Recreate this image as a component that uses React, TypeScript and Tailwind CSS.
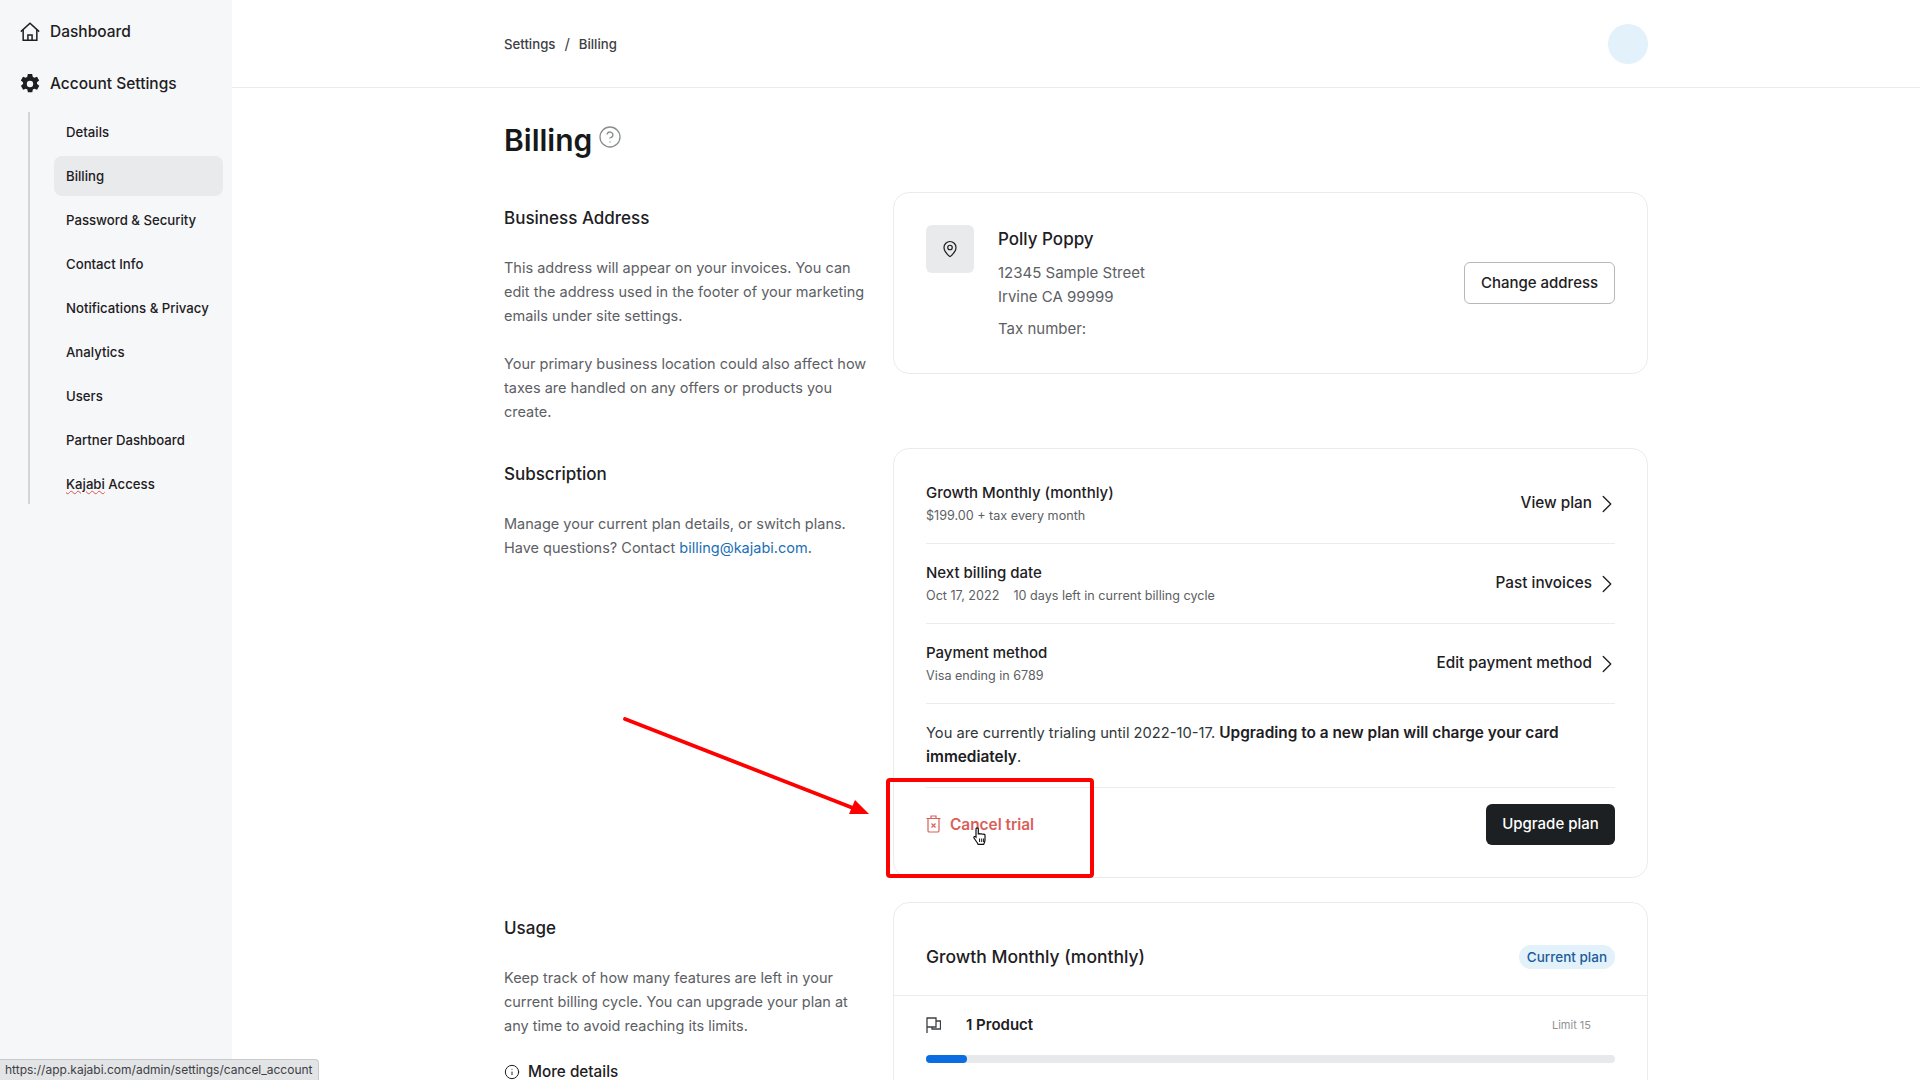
import { ChevronRight, CircleHelp, Info, MapPin } from "lucide-react";

const NAV = [
  "Details",
  "Billing",
  "Password & Security",
  "Contact Info",
  "Notifications & Privacy",
  "Analytics",
  "Users",
  "Partner Dashboard",
  "Kajabi Access",
];

const BILLING_ROWS = [
  { title: "Growth Monthly (monthly)", sub: "$199.00 + tax every month", link: "View plan" },
  { title: "Next billing date", sub: "Oct 17, 2022\u00a0\u00a0\u00a0 10 days left in current billing cycle", link: "Past invoices" },
  { title: "Payment method", sub: "Visa ending in 6789", link: "Edit payment method" },
];

function HomeIcon() {
  return (
    <svg viewBox="0 0 24 24" className="h-5 w-5 shrink-0" fill="none" stroke="#1d2023" strokeWidth="1.8">
      <path d="M1 11.5 12 1.5l11 10" />
      <path d="M3.8 9.5V22h16.4V9.5" />
      <path d="M9.5 22v-6.5h5V22" />
    </svg>
  );
}

function GearIcon() {
  return (
    <svg viewBox="1 1 22 22" className="h-5 w-5 shrink-0" fill="#1d2023">
      <path
        fillRule="evenodd"
        d="M9.6 1h4.8l.6 3.1 1.7.9 3-1.1 2.4 4.2-2.4 2 .1 1.9 2.4 2-2.4 4.2-3-1.1-1.7 1-.6 3h-4.8l-.6-3-1.7-1-3 1.1-2.4-4.2 2.4-2-.1-1.9-2.4-2 2.4-4.2 3 1.1 1.7-.9zM12 8.5a3.5 3.5 0 1 0 0 7 3.5 3.5 0 0 0 0-7z"
      />
    </svg>
  );
}

function Sidebar() {
  return (
    <aside className="w-[232px] shrink-0 bg-[#f6f7f8] pl-5 pt-[22px]">
      <div className="flex h-5 items-center gap-[10px] text-[15.5px] font-medium text-[#1d2023]">
        <HomeIcon />
        Dashboard
      </div>
      <div className="mt-[32px] flex h-5 items-center gap-[10px] text-[15.5px] font-medium text-[#1d2023]">
        <GearIcon />
        Account Settings
      </div>
      <div className="ml-[8px] mt-[18px] border-l-2 border-[#d3d5d7] pl-[24px]">
        {NAV.map((item) => (
          <div
            key={item}
            className={`mb-1 flex h-10 w-[169px] items-center rounded-lg pl-[12px] pt-[2px] text-[13.2px] font-medium text-[#1d2023] last:mb-0 ${
              item === "Billing" ? "bg-[#e9eaeb]" : ""
            }`}
          >
            {item === "Kajabi Access" ? (
              <>
                <span className="underline decoration-wavy decoration-[#d9534f] decoration-1">Kajabi</span>
                &nbsp;Access
              </>
            ) : (
              item
            )}
          </div>
        ))}
      </div>
    </aside>
  );
}

function Card({ children, className }: { children: React.ReactNode; className?: string }) {
  return <div className={`rounded-2xl border border-[#ebeced] bg-white ${className ?? ""}`}>{children}</div>;
}

function LeftText({ title, children }: { title: string; children: React.ReactNode }) {
  return (
    <div className="pt-[14px]">
      <h2 className="text-[17px] font-medium leading-6 text-[#1d2023]">{title}</h2>
      <div className="mt-[26px] text-[14.5px] leading-6 text-[#5c6064]">{children}</div>
    </div>
  );
}

function TrashX() {
  return (
    <svg viewBox="0 0 15 18" className="h-[18px] w-[15px]" fill="none" stroke="#d9605a" strokeWidth="1.2">
      <path d="M.5 3.5h14M5 3.5V1h5v2.5M2 3.5v12.2q0 1.3 1.3 1.3h8.4q1.3 0 1.3-1.3V3.5" />
      <path d="m5.5 8.5 4 4M9.500 8.500l-4 4" />
    </svg>
  );
}

function FlagIcon() {
  return (
    <svg viewBox="0 0 15 16" className="h-4 w-[15px] shrink-0" fill="none" stroke="#3c4044" strokeWidth="1.3">
      <path d="M1 16V1h9v9H1" />
      <path d="M10 4h4.500v8H6v-2" />
    </svg>
  );
}

export default function App() {
  return (
    <div className="relative flex h-screen w-full overflow-hidden bg-white font-['Inter','Liberation_Sans',sans-serif]">
      <Sidebar />
      <div className="min-w-0 flex-1">
        <header className="h-[88px] border-b border-[#ebeced]">
          <div className="ml-[272px] flex h-[87px] w-[1144px] items-center justify-between">
            <div className="flex items-center gap-[9px] pt-[2px] text-[13.2px] font-medium text-[#3c4044]">
              <span>Settings</span>
              <span className="text-[15px] font-normal">/</span>
              <span>Billing</span>
            </div>
            <div className="h-10 w-10 rounded-full bg-[#e3f1fa]" />
          </div>
        </header>

        <main className="ml-[272px] w-[1144px]">
          <div className="flex h-[104px] items-start gap-[6px] pt-[32px]">
            <h1 className="text-[30px] font-semibold leading-10 text-[#16181a]">Billing</h1>
            <CircleHelp className="mt-[5px] h-6 w-6 text-[#8a8d90]" strokeWidth={1.3} />
          </div>

          <div className="grid grid-cols-[375px_1fr] gap-x-[14px] gap-y-[24px]">
            <LeftText title="Business Address">
              <p>
                This address will appear on your invoices. You can
                <br />
                edit the address used in the footer of your marketing
                <br />
                emails under site settings.
              </p>
              <p className="mt-6">
                Your primary business location could also affect how
                <br />
                taxes are handled on any offers or products you
                <br />
                create.
              </p>
            </LeftText>
            <Card className="flex h-[182px] items-center justify-between self-start pl-[32px] pr-[32px]">
              <div className="flex self-start pt-[32px]">
                <div className="flex h-12 w-12 items-center justify-center rounded-md bg-[#e9eaeb]">
                  <MapPin className="h-[18px] w-[18px] text-[#1d2023]" strokeWidth={1.6} />
                </div>
                <div className="ml-6 text-[15px] leading-6 text-[#5c6064]">
                  <div className="mb-[8px] text-[17px] font-medium leading-7 text-[#1d2023]">Polly Poppy</div>
                  <div>12345 Sample Street</div>
                  <div>Irvine CA 99999</div>
                  <div className="mt-2">Tax number:</div>
                </div>
              </div>
              <button className="h-[42px] w-[151px] rounded-md border border-[#b5b7b9] text-[15px] font-medium text-[#1d2023]">
                Change address
              </button>
            </Card>

            <LeftText title="Subscription">
              <p>
                Manage your current plan details, or switch plans.
                <br />
                Have questions? Contact <span className="text-[#1b6fb5]">billing@kajabi.com</span>.
              </p>
            </LeftText>
            <Card className="h-[430px] px-[32px] pt-[15px]">
              {BILLING_ROWS.map((row) => (
                <div key={row.title} className="flex h-[80px] items-center justify-between border-b border-[#ebeced]">
                  <div>
                    <div className="text-[15px] font-medium leading-6 text-[#1d2023]">{row.title}</div>
                    <div className="text-[12.6px] leading-[22px] text-[#5c6064]">{row.sub}</div>
                  </div>
                  <div className="-mr-[7px] flex items-center text-[15.3px] font-medium text-[#1d2023]">
                    {row.link}
                    <ChevronRight className="h-[30px] w-[30px]" strokeWidth={1.1} />
                  </div>
                </div>
              ))}
              <div className="border-b border-[#ebeced] pb-[18px] pt-[17px] text-[14.7px] leading-6 text-[#33373a]">
                You are currently trialing until 2022-10-17.{" "}
                <b className="text-[15.4px] font-semibold text-[#1d2023]">Upgrading to a new plan will charge your card immediately</b>.
              </div>
              <div className="flex items-center justify-between pt-[16px]">
                <div className="flex items-center gap-[9px] text-[15.4px] font-semibold text-[#d9605a]">
                  <TrashX />
                  Cancel trial
                </div>
                <button className="h-[41px] w-[129px] rounded-md bg-[#1d2023] text-[15px] font-medium text-white">
                  Upgrade plan
                </button>
              </div>
            </Card>

            <LeftText title="Usage">
              <p>
                Keep track of how many features are left in your
                <br />
                current billing cycle. You can upgrade your plan at
                <br />
                any time to avoid reaching its limits.
              </p>
              <div className="mt-[22px] flex items-center gap-2 text-[15.3px] font-medium text-[#1d2023]">
                <Info className="h-4 w-4" strokeWidth={1.5} />
                More details
              </div>
            </LeftText>
            <Card className="h-[300px]">
              <div className="flex h-[93px] items-center justify-between border-b border-[#ebeced] px-[32px] pt-[16px]">
                <div className="text-[17.5px] font-medium text-[#1d2023]">Growth Monthly (monthly)</div>
                <div className="rounded-full bg-[#e3f1fa] px-[8px] py-[2px] text-[13.5px] font-medium text-[#1c5c9c]">Current plan</div>
              </div>
              <div className="px-[32px] pt-[18px]">
                <div className="flex items-center">
                  <FlagIcon />
                  <span className="ml-[25px] text-[15px] font-semibold text-[#1d2023]">1 Product</span>
                  <span className="ml-auto mr-6 text-[11px] text-[#8f9295]">Limit 15</span>
                </div>
                <div className="mt-[18px] h-2 rounded-full bg-[#e8e9ea]">
                  <div className="h-2 rounded-full bg-[#0b6ee0]" style={{ width: "6%" }} />
                </div>
              </div>
            </Card>
          </div>
        </main>
      </div>

      {/* link preview in the browser's status bar */}
      <div className="absolute bottom-0 left-0 flex h-[21px] w-[319px] items-center rounded-tr border-r border-t border-[#c8cacc] bg-[#e3e4e6] pl-[5px] text-[12px] text-[#3c4044]">
        https://app.kajabi.com/admin/settings/cancel_account
      </div>

      {/* annotation over the page */}
      <div className="absolute left-[886px] top-[778px] h-[100px] w-[208px] rounded-sm border-4 border-[#ff0000]" />
      <svg className="absolute left-[600px] top-[700px]" width="300" height="130" fill="#ff0000">
        <path d="M25 19 253 108" stroke="#ff0000" strokeWidth="3.8" strokeLinecap="round" />
        <path d="M255 100 269 114 249 114Z" />
      </svg>
      <svg className="absolute left-[973px] top-[827px]" width="16" height="18" viewBox="0 0 16 18" fill="#fff" stroke="#111" strokeWidth="1.2">
        <path d="M3 2c0-1.400 2.300-1.400 2.300 0v5.500c0-1.100 2.200-1.100 2.200 0 0-1 2.200-1 2.200.2 0-.9 2.300-.9 2.300.4V13c0 1.800-.8 3-1.300 4.400H5.200C4.300 15.500 2 12.800 1 11c-.5-1.300 1-2 2-1z" />
        <path d="M6.600 11.500v3.500M8.700 11.500v3.500M10.600 11.500v3.500" strokeWidth="1" />
      </svg>
    </div>
  );
}
